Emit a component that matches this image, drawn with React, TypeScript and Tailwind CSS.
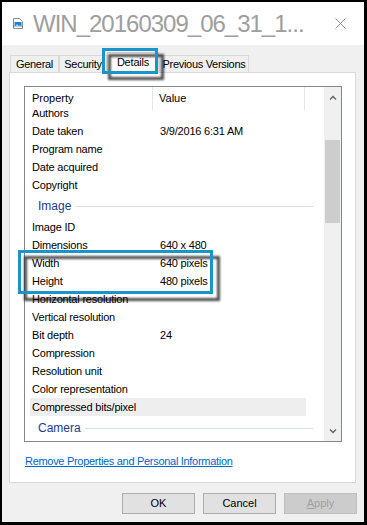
import React from "react";

type Row = {name: string; value?: string; group?: boolean; selected?: boolean};

const rows: Row[] = [
  {name: "Authors"},
  {name: "Date taken", value: "3/9/2016 6:31 AM"},
  {name: "Program name"},
  {name: "Date acquired"},
  {name: "Copyright"},
  {name: "Image", group: true},
  {name: "Image ID"},
  {name: "Dimensions", value: "640 x 480"},
  {name: "Width", value: "640 pixels"},
  {name: "Height", value: "480 pixels"},
  {name: "Horizontal resolution"},
  {name: "Vertical resolution"},
  {name: "Bit depth", value: "24"},
  {name: "Compression"},
  {name: "Resolution unit"},
  {name: "Color representation"},
  {name: "Compressed bits/pixel", selected: true},
  {name: "Camera", group: true},
];

function FileIcon() {
  return (
    <svg width="10" height="11" viewBox="0 0 10 11">
      <path d="M0.5 0.5h6l3 3v7h-9z" fill="#fff" stroke="#8a8a8a" />
      <rect x="1.5" y="4" width="7" height="5" fill="#1f7fd0" />
      <path d="M1.5 9l2.5-3 2 2 1-1 1.5 2z" fill="#9fd0f5" />
    </svg>
  );
}

function Chevron({up}: {up?: boolean}) {
  return (
    <svg width="8" height="5" viewBox="0 0 8 5">
      <path d={up ? "M1 4.5L4 1.5L7 4.5" : "M1 0.5L4 3.5L7 0.5"} fill="none" stroke="#606060" strokeWidth="1.3" />
    </svg>
  );
}

function ListRow({row}: {row: Row}) {
  if (row.group) {
    return (
      <div className="h-[24px] flex items-center pl-[13px] pr-[10px]">
        <span className="text-[12px] text-[#1e3a8f]">{row.name}</span>
        <div className="flex-1 h-px bg-[#dce3ee] ml-[4px]" />
      </div>
    );
  }
  return (
    <div
      className={
        "h-[18px] ml-[5px] w-[276px] pl-[2px] flex items-center text-[11px] tracking-[-0.2px] text-black " +
        (row.selected ? "bg-[#eeeeee]" : "")
      }>
      <span className="w-[128px] whitespace-nowrap">{row.name}</span>
      <span className="whitespace-nowrap">{row.value}</span>
    </div>
  );
}

function Tab({label, width, selected}: {label: string; width: string; selected?: boolean}) {
  if (selected) {
    return (
      <div
        className={`${width} h-[21px] -mb-px bg-white border border-b-0 border-[#d9d9d9] flex items-center justify-center text-[11px] tracking-[-0.2px] whitespace-nowrap text-black z-10 relative pb-[2px]`}>
        {label}
      </div>
    );
  }
  return (
    <div
      className={`${width} h-[17px] bg-[#f0f0f0] border border-b-0 border-[#d9d9d9] flex items-center justify-center text-[11px] tracking-[-0.3px] whitespace-nowrap text-black`}>
      {label}
    </div>
  );
}

export default function App() {
  return (
    <div className="relative w-[367px] h-[525px] bg-black pt-[2px] pl-[2px] pr-[3px] pb-[3px] font-['Liberation_Sans',Arial,sans-serif] overflow-hidden">
      <div className="h-full bg-[#f0f0f0] flex flex-col">
        {/* title bar */}
        <div className="h-[43px] bg-white flex items-center pl-[11px] pr-[18px] shrink-0">
          <FileIcon />
          <span className="ml-[10px] text-[24px] tracking-[-1px] text-[#9e9e9e] whitespace-nowrap leading-none">
            WIN_20160309_06_31_1...
          </span>
          <div className="flex-1" />
          <svg width="11" height="11" viewBox="0 0 11 11">
            <path d="M0.5 0.5L10.5 10.5M10.5 0.5L0.5 10.5" stroke="#8c8c8c" strokeWidth="1" />
          </svg>
        </div>

        {/* tabs */}
        <div className="h-[27px] pt-[7px] pl-[8px] flex items-end shrink-0">
          <Tab label="General" width="w-[49px]" />
          <Tab label="Security" width="w-[48px]" />
          <Tab label="Details" width="w-[52px]" selected />
          <Tab label="Previous Versions" width="w-[90px]" />
        </div>

        {/* tab panel */}
        <div className="mx-[7px] mr-[8px] h-[411px] bg-white border border-[#d9d9d9] flex flex-col pt-[13px] pl-[14px] shrink-0">
          <div className="w-[318px] h-[356px] border border-[#828790] flex">
            <div className="flex-1 flex flex-col">
              <div className="h-[23px] flex text-[11px] text-black shrink-0">
                <div className="w-[128px] pl-[7px] flex items-center border-r border-[#e5e5e5]">Property</div>
                <div className="w-[152px] pl-[6px] flex items-center border-r border-[#e5e5e5]">Value</div>
                <div className="flex-1" />
              </div>
              <div className="flex-1 overflow-hidden">
                <div className="-mt-[6px]">
                  {rows.map(r => (
                    <ListRow key={r.name} row={r} />
                  ))}
                </div>
              </div>
            </div>
            <div className="w-[17px] bg-[#f0f0f0] flex flex-col items-center">
              <div className="h-[20px] flex items-center justify-center">
                <Chevron up />
              </div>
              <div className="mt-[33px] h-[83px] w-[15px] bg-[#cdcdcd]" />
              <div className="flex-1" />
              <div className="h-[20px] flex items-center justify-center">
                <Chevron />
              </div>
            </div>
          </div>
          <div className="mt-[12px] text-[11px] tracking-[-0.3px] text-[#0066cc] underline leading-[14px] pl-px">
            Remove Properties and Personal Information
          </div>
        </div>

        {/* buttons */}
        <div className="mt-[10px] flex justify-end gap-[8px] pr-[7px] shrink-0">
          <button className="w-[73px] h-[21px] bg-[#e1e1e1] border border-[#adadad] text-[11px] text-black">OK</button>
          <button className="w-[73px] h-[21px] bg-[#e1e1e1] border border-[#adadad] text-[11px] text-black">Cancel</button>
          <button className="w-[73px] h-[21px] bg-[#cccccc] border border-[#bfbfbf] text-[11px] text-[#a0a0a0]">
            <span className="underline">A</span>pply
          </button>
        </div>
      </div>

      {/* annotation boxes */}
      <div className="absolute left-[108px] top-[54px] w-[56px] h-[26px] border-[3px] border-black/70 blur-[1px] z-20" />
      <div className="absolute left-[102px] top-[48px] w-[56px] h-[26px] border-[3px] border-[#1a94cb] z-30" />
      <div className="absolute left-[24px] top-[256px] w-[196px] h-[45px] border-[3px] border-black/70 blur-[1px] z-20" />
      <div className="absolute left-[18px] top-[250px] w-[195px] h-[44px] border-[3px] border-[#1a94cb] z-30" />
    </div>
  );
}
